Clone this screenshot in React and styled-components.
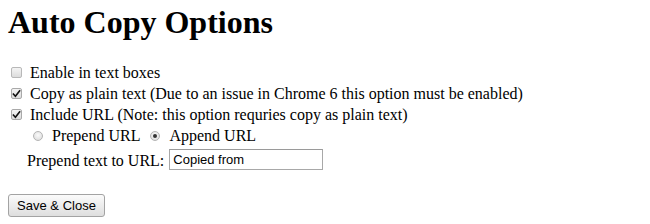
import React from "react";
import styled, { createGlobalStyle } from "styled-components";

const Global = createGlobalStyle`
  html, body { margin: 0; padding: 0; background: #fff; }
  body { font-family: "Liberation Serif", "Times New Roman", serif; font-size: 16px; color: #000; }
`;

const Page = styled.div`
  padding: 4px 8px 0 8px;
`;

const Title = styled.h1`
  margin: 0 0 21px 0;
  font-size: 32px;
  font-weight: bold;
  line-height: 37px;
`;

const Row = styled.div`
  display: flex;
  align-items: center;
  height: 21px;
  line-height: 21px;
  padding-left: ${(p) => p.$indent || 0}px;
`;

const Box = styled.span`
  width: 11px;
  height: 11px;
  box-sizing: border-box;
  border: 1px solid ${(p) => (p.$checked ? "#a9a9a9" : "#b8b8b8")};
  border-radius: 2px;
  background: linear-gradient(#f4f4f4, #dcdcdc);
  margin: 0 8px 0 3px;
  display: inline-flex;
  align-items: center;
  justify-content: center;
  flex: none;
`;

const Radio = styled.span`
  width: 10px;
  height: 10px;
  box-sizing: border-box;
  border: 1px solid #b4b4b4;
  border-radius: 50%;
  background: radial-gradient(circle at 50% 40%, #fafafa, #d8d8d8);
  display: inline-flex;
  align-items: center;
  justify-content: center;
  margin-right: 9px;
  flex: none;
  &::after {
    content: "";
    width: 4px;
    height: 4px;
    border-radius: 50%;
    background: ${(p) => (p.$checked ? "#333" : "transparent")};
  }
`;

const RadioLabel = styled.span`
  margin-right: 10px;
`;

const FieldRow = styled.div`
  display: flex;
  align-items: center;
  padding-left: 19px;
  height: 24px;
  margin-top: 1px;
`;

const FieldLabel = styled.span`
  margin-right: 5px;
  padding-top: 3px;
`;

const TextInput = styled.input`
  width: 154px;
  height: 21px;
  box-sizing: border-box;
  border: 1px solid #a8a8a8;
  border-top-color: #9a9a9a;
  padding: 1px 3px;
  font-family: "Liberation Sans", Arial, sans-serif;
  font-size: 13px;
  color: #000;
  outline: none;
  margin: 0;
`;

const Button = styled.button`
  margin-top: 23px;
  width: 97px;
  height: 23px;
  border: 1px solid #a3a3a3;
  border-radius: 3px;
  background: linear-gradient(#fbfbfb, #dedede);
  font-family: "Liberation Sans", Arial, sans-serif;
  font-size: 13px;
  color: #000;
  padding: 0;
`;

const Check = () => (
  <svg width="10" height="9" viewBox="0 0 10 9">
    <path d="M1 4.5 L3.8 7.5 L9 1" fill="none" stroke="#111" strokeWidth="1.8" />
  </svg>
);

export default function App() {
  return (
    <Page>
      <Global />
      <Title>Auto Copy Options</Title>
      <Row>
        <Box />
        Enable in text boxes
      </Row>
      <Row>
        <Box $checked>
          <Check />
        </Box>
        Copy as plain text (Due to an issue in Chrome 6 this option must be enabled)
      </Row>
      <Row>
        <Box $checked>
          <Check />
        </Box>
        Include URL (Note: this option requries copy as plain text)
      </Row>
      <Row $indent={25}>
        <Radio />
        <RadioLabel>Prepend URL</RadioLabel>
        <Radio $checked />
        <span>Append URL</span>
      </Row>
      <FieldRow>
        <FieldLabel>Prepend text to URL:</FieldLabel>
        <TextInput defaultValue="Copied from" />
      </FieldRow>
      <Button>Save &amp; Close</Button>
    </Page>
  );
}
